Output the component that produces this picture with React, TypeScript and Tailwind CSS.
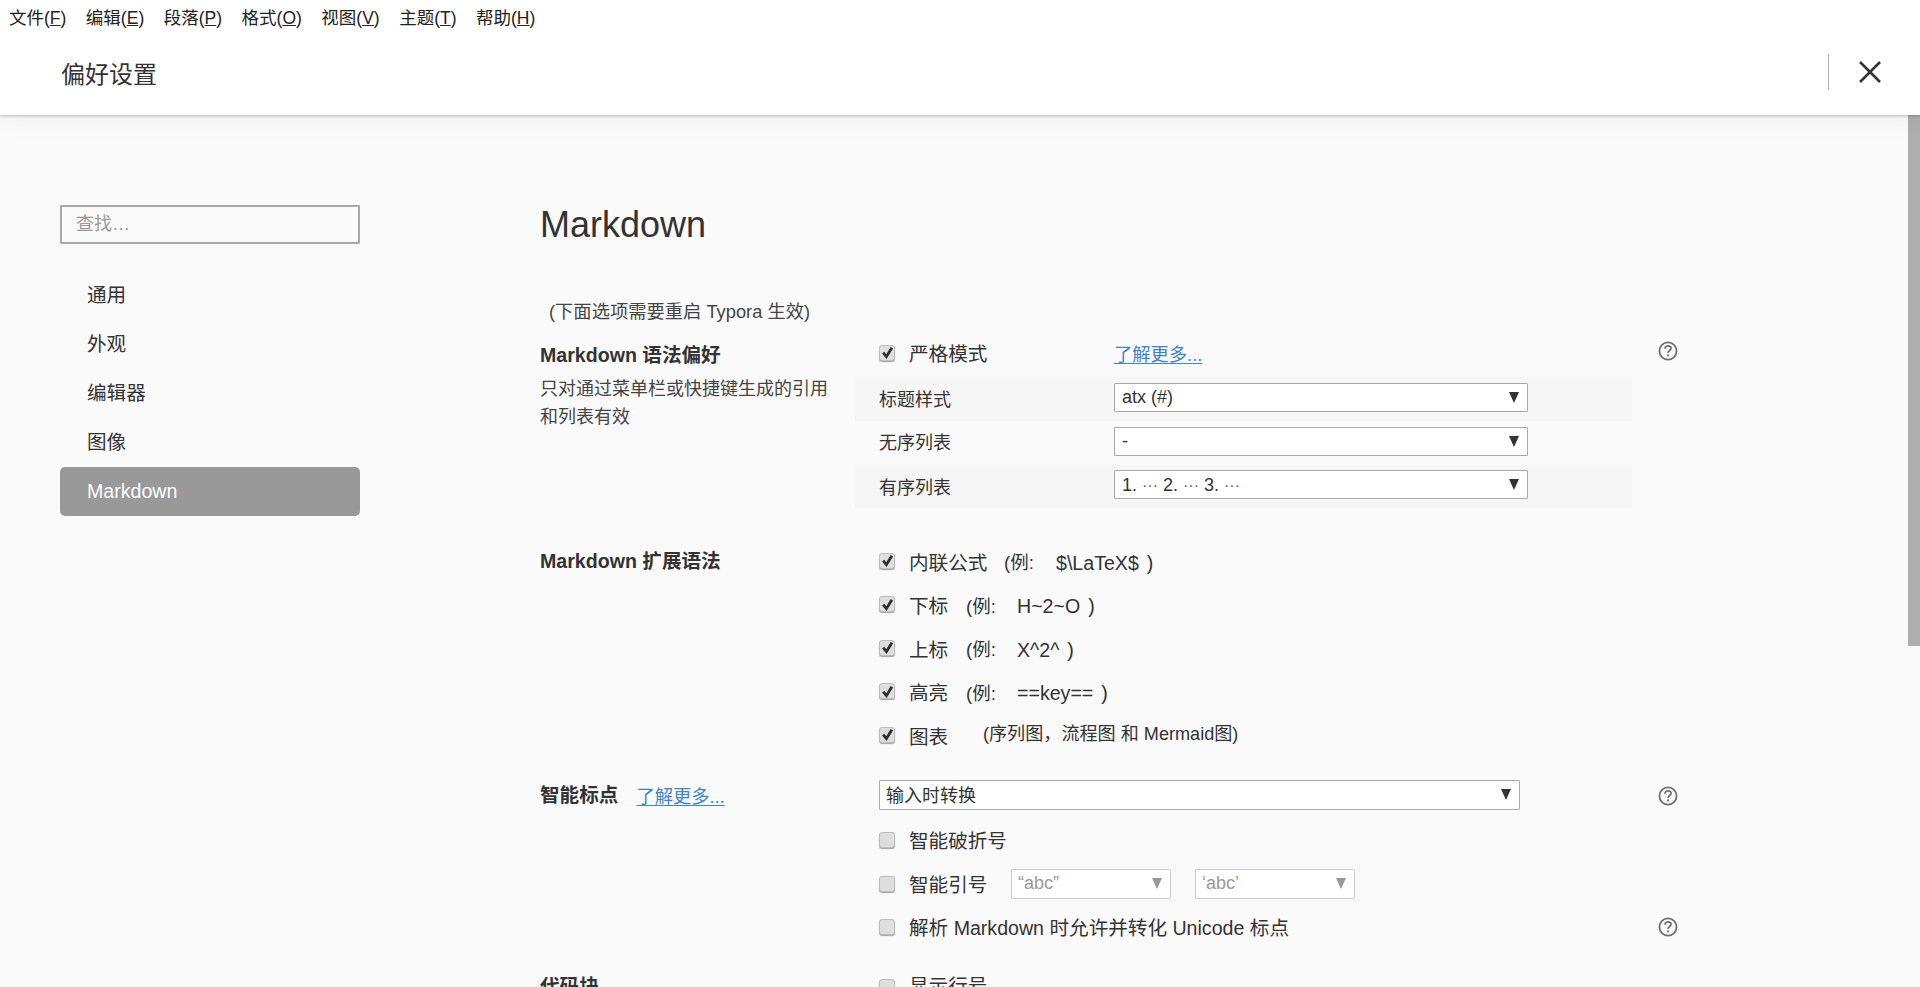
import React from "react";

const Caret = ({ muted }: { muted?: boolean }) => (
  <svg width="10" height="11" viewBox="0 0 10 11" className="shrink-0">
    <polygon points="0,0 10,0 5,11" fill={muted ? "#999999" : "#333333"} />
  </svg>
);

const Select = ({
  text,
  cls,
  muted,
  textCls = "",
}: {
  text: React.ReactNode;
  cls: string;
  muted?: boolean;
  textCls?: string;
}) => (
  <div
    className={`flex items-center justify-between bg-white border rounded-[1px] pr-[8px] text-[18px] ${cls} ${
      muted ? "border-[#cccccc] text-[#999999] bg-[#fafafa]" : "border-[#a9a9a9] text-[#333333]"
    }`}
  >
    <span className={textCls}>{text}</span>
    <Caret muted={muted} />
  </div>
);

const Check = ({ on = true }: { on?: boolean }) => (
  <span className="flex items-center justify-center w-[16px] h-[16px] shrink-0 rounded-[3px] bg-[#dedede] border border-[#bdbdbd] shadow-[0_1px_1px_rgba(0,0,0,0.35)] mr-[14px]">
    {on && (
      <svg width="13" height="13" viewBox="0 0 12 12">
        <path d="M2 6.2 L5 9.8 L10 1.6" fill="none" stroke="#2f2f2f" strokeWidth="2.6" />
      </svg>
    )}
  </span>
);

const Help = ({ cls = "" }: { cls?: string }) => (
  <svg width="20" height="20" viewBox="0 0 20 20" className={`ml-[26px] shrink-0 ${cls}`}>
    <circle cx="10" cy="10" r="8.6" fill="none" stroke="#707070" strokeWidth="1.8" />
    <path d="M6.9 7.8 C6.9 5.8 8.4 4.8 10 4.8 C11.8 4.8 13.1 5.9 13.1 7.5 C13.1 9.5 10 9.6 10 12" fill="none" stroke="#707070" strokeWidth="1.7" />
    <rect x="9.1" y="13.4" width="1.9" height="1.9" fill="#707070" />
  </svg>
);

const Line = ({
  children,
  help,
  helpCls,
  stripe,
  cls,
}: {
  children: React.ReactNode;
  help?: boolean;
  helpCls?: string;
  stripe?: boolean;
  cls: string;
}) => (
  <div className="flex items-center">
    <div className={`w-[777px] flex items-center pl-[24px] ${cls} ${stripe ? "bg-[#f6f6f6]" : ""}`}>{children}</div>
    {help && <Help cls={helpCls} />}
  </div>
);

const Link = ({ cls = "" }: { cls?: string }) => (
  <span className={`text-[18.3px] text-[#4183c4] underline underline-offset-2 ${cls}`}>了解更多...</span>
);

const menus: [string, string][] = [
  ["文件", "F"],
  ["编辑", "E"],
  ["段落", "P"],
  ["格式", "O"],
  ["视图", "V"],
  ["主题", "T"],
  ["帮助", "H"],
];

const nav = ["通用", "外观", "编辑器", "图像"];

const Dots = () => <span className="text-[16px] text-[#666666]">···</span>;

const Opt = ({ name, ex }: { name: string; ex: string }) => (
  <>
    <Check />
    <span className="w-[57px] shrink-0 mt-[5px]">{name}</span>
    <span className="text-[18.5px] w-[51px] shrink-0 mt-[5px]">(例:</span>
    <span className="mt-[5px]">{ex}</span>
    <span className="ml-[8px] mt-[5px]">)</span>
  </>
);

export default function App() {
  return (
    <div className="h-[987px] w-full overflow-hidden flex flex-col bg-[#fafafa] text-[#333333] font-['Liberation_Sans','Noto_Sans_CJK_SC',sans-serif]">
      <div className="relative z-10 h-[115px] shrink-0 bg-white flex flex-col shadow-[0_1px_3px_rgba(0,0,0,0.25),0_4px_30px_rgba(0,0,0,0.04)]">
        <div className="h-[36px] flex items-center pl-[9px] gap-[19.5px] text-[17.5px] text-[#222222]">
          {menus.map(([t, k]) => (
            <span key={k}>
              {t}(<span className="underline">{k}</span>)
            </span>
          ))}
        </div>
        <div className="flex-1 flex items-center justify-between pl-[61px] pr-[39px]">
          <span className="text-[24px] mb-[2px]">偏好设置</span>
          <div className="flex items-center gap-[30px] mb-[7px]">
            <div className="w-[1px] h-[36px] bg-[#b5b5b5]" />
            <svg width="22" height="22" viewBox="0 0 22 22">
              <path d="M1 1 L21 21 M21 1 L1 21" stroke="#333333" strokeWidth="2.6" fill="none" />
            </svg>
          </div>
        </div>
      </div>

      <div className="flex-1 min-h-0 flex">
        <div className="w-[540px] shrink-0 pl-[60px] pt-[90px]">
          <div className="w-[300px] h-[39px] border-2 border-[#a9a9a9] rounded-[1px] flex items-center pl-[14px] pb-[1px] text-[18px] text-[#999999]">
            查找…
          </div>
          <div className="w-[300px] mt-[27px] flex flex-col text-[19.6px]">
            {nav.map((n) => (
              <div key={n} className="h-[49px] flex items-center pl-[27px]">
                {n}
              </div>
            ))}
            <div className="h-[49px] flex items-center pl-[27px] rounded-[5px] bg-[#999999] text-white">Markdown</div>
          </div>
        </div>

        <div className="flex-1 min-w-0 pt-[90px]">
          <h1 className="text-[36px] leading-[40px] font-normal">Markdown</h1>
          <p className="mt-[54px] h-[26px] leading-[26px] text-[18.3px] text-[#444444] pl-[9px]">(下面选项需要重启 Typora 生效)</p>

          <div className="flex mt-[3px]">
            <div className="w-[315px] shrink-0 pt-[13px]">
              <div className="text-[19.6px] leading-[28px] font-bold">Markdown 语法偏好</div>
              <div className="mt-[6px] text-[18px] leading-[28px] text-[#444444] w-[295px]">只对通过菜单栏或快捷键生成的引用和列表有效</div>
            </div>
            <div className="text-[19.6px]">
              <Line cls="h-[49px]" help helpCls="mt-[-3px]">
                <Check />
                <span className="w-[205px] mt-[4px]">严格模式</span>
                <Link cls="mt-[5px]" />
              </Line>
              <Line cls="h-[44px] text-[18px]" stripe>
                <span className="w-[235px] mt-[3px]">标题样式</span>
                <Select text="atx (#)" cls="w-[414px] h-[29px] mt-[-3px] pl-[7px]" />
              </Line>
              <Line cls="h-[44px] text-[18px]">
                <span className="w-[235px]">无序列表</span>
                <Select text="-" cls="w-[414px] h-[29px] mt-[-4px] pl-[7px]" />
              </Line>
              <Line cls="h-[43px] text-[18px]" stripe>
                <span className="w-[235px] mt-[3px]">有序列表</span>
                <Select
                  text={
                    <>
                      1. <Dots /> 2. <Dots /> 3. <Dots />
                    </>
                  }
                  textCls="mt-[2px]"
                  cls="w-[414px] h-[29px] mt-[-5px] pl-[7px]"
                />
              </Line>
            </div>
          </div>

          <div className="flex mt-[31px]">
            <div className="w-[315px] shrink-0 text-[19.6px] leading-[43.5px] font-bold pt-[1px]">Markdown 扩展语法</div>
            <div className="text-[19.6px]">
              <Line cls="h-[43.5px]">
                <Check />
                <span className="w-[95px] shrink-0 mt-[5px]">内联公式</span>
                <span className="text-[18.5px] w-[52px] shrink-0 mt-[5px]">(例:</span>
                <span className="mt-[5px]">$\LaTeX$</span>
                <span className="ml-[8px] mt-[5px]">)</span>
              </Line>
              <Line cls="h-[43.5px]">
                <Opt name="下标" ex="H~2~O" />
              </Line>
              <Line cls="h-[43.5px]">
                <Opt name="上标" ex="X^2^" />
              </Line>
              <Line cls="h-[43.5px]">
                <Opt name="高亮" ex="==key==" />
              </Line>
              <Line cls="h-[43.5px]">
                <Check />
                <span className="w-[74px] shrink-0 mt-[5px]">图表</span>
                <span className="text-[18.1px]">(序列图，流程图 和 Mermaid图)</span>
              </Line>
            </div>
          </div>

          <div className="flex mt-[16px]">
            <div className="w-[315px] shrink-0 h-[44px] flex items-center gap-[18px]">
              <span className="text-[19.6px] font-bold mt-[3px]">智能标点</span>
              <Link cls="mt-[4px]" />
            </div>
            <div className="text-[19.6px]">
              <Line cls="h-[44px] mb-[2px]" help>
                <Select text="输入时转换" textCls="mt-[4px]" cls="w-[641px] h-[30px] pl-[6px]" />
              </Line>
              <Line cls="h-[43.5px]">
                <Check on={false} />
                <span className="mt-[3px]">智能破折号</span>
              </Line>
              <Line cls="h-[43.5px]">
                <Check on={false} />
                <span className="w-[102px] shrink-0 mt-[3px]">智能引号</span>
                <Select text="“abc”" cls="w-[160px] h-[30px] pl-[6px]" muted />
                <Select text="‘abc’" cls="w-[160px] h-[30px] ml-[24px] pl-[6px]" muted />
              </Line>
              <Line cls="h-[43.5px]" help>
                <Check on={false} />
                <span className="mt-[3px]">解析 Markdown 时允许并转化 Unicode 标点</span>
              </Line>
            </div>
          </div>

          <div className="flex mt-[16px]">
            <div className="w-[315px] shrink-0 h-[44px] flex items-center text-[19.6px] font-bold">代码块</div>
            <div className="text-[19.6px]">
              <Line cls="h-[44px]">
                <Check on={false} />
                <span>显示行号</span>
              </Line>
            </div>
          </div>
        </div>

        <div className="w-[12px] shrink-0">
          <div className="h-[531px] bg-[#aeaeae]" />
        </div>
      </div>
    </div>
  );
}
